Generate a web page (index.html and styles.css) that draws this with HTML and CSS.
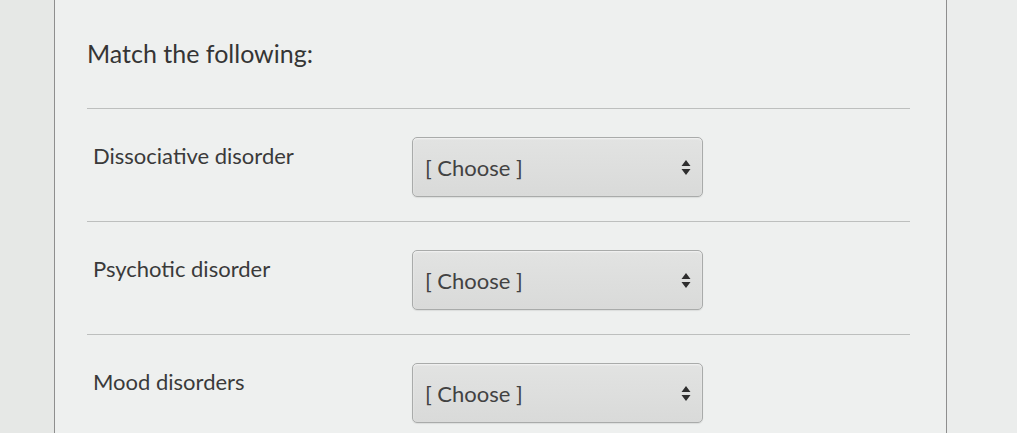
FILE: index.html
```html
<!DOCTYPE html>
<html lang="en">
<head>
<meta charset="utf-8">
<title>Match the following</title>
<link rel="stylesheet" href="styles.css">
</head>
<body>
<div class="page">
  <div class="gutter"></div>
  <main class="panel">
    <h1 class="title">Match the following:</h1>
    <div class="rows">
      <div class="row">
        <div class="label">Dissociative disorder</div>
        <div class="select">
          <span class="select-text">[ Choose ]</span>
          <svg class="arrows" width="10" height="17" viewBox="0 0 10 17"><path d="M5 1 L9.5 7 L0.5 7 Z M5 16 L9.5 10 L0.5 10 Z" fill="#2e2e2e"/></svg>
        </div>
      </div>
      <div class="row">
        <div class="label">Psychotic disorder</div>
        <div class="select">
          <span class="select-text">[ Choose ]</span>
          <svg class="arrows" width="10" height="17" viewBox="0 0 10 17"><path d="M5 1 L9.5 7 L0.5 7 Z M5 16 L9.5 10 L0.5 10 Z" fill="#2e2e2e"/></svg>
        </div>
      </div>
      <div class="row">
        <div class="label">Mood disorders</div>
        <div class="select">
          <span class="select-text">[ Choose ]</span>
          <svg class="arrows" width="10" height="17" viewBox="0 0 10 17"><path d="M5 1 L9.5 7 L0.5 7 Z M5 16 L9.5 10 L0.5 10 Z" fill="#2e2e2e"/></svg>
        </div>
      </div>
    </div>
  </main>
  <div class="gutter gutter-right"></div>
</div>
</body>
</html>
```

FILE: styles.css
```css
html, body {
  margin: 0;
  padding: 0;
  height: 100%;
}
body {
  background: #e7e9e8;
  font-family: Lato, "Noto Sans", sans-serif;
  color: #383838;
  overflow: hidden;
}
.page {
  display: flex;
  height: 433px;
}
.gutter {
  width: 54px;
  flex: none;
  background: #e6e8e6;
}
.gutter-right {
  flex: 1;
  background: #ebedec;
}
.panel {
  width: 893px;
  flex: none;
  background: #eef0ef;
  border-left: 1px solid #8e8e8e;
  border-right: 1px solid #8e8e8e;
  padding: 0 36px 0 32px;
  box-sizing: border-box;
}
.title {
  margin: 0;
  padding: 37px 0 0 0;
  height: 108px;
  box-sizing: border-box;
  font-size: 25px;
  font-weight: 400;
  line-height: 32px;
  color: #353535;
}
.row {
  display: flex;
  align-items: flex-start;
  border-top: 1px solid #bdbfbe;
  padding: 28px 0 24px 6px;
  height: 113px;
  box-sizing: border-box;
}
.label {
  width: 319px;
  flex: none;
  padding-top: 6px;
  font-size: 22px;
  line-height: 26px;
  color: #3a3a3a;
}
.select {
  width: 291px;
  height: 60px;
  box-sizing: border-box;
  border: 1px solid #a9abaa;
  border-radius: 5px;
  background: linear-gradient(#e2e3e2, #d9dad9);
  box-shadow: inset 0 1px 2px rgba(255,255,255,0.6), 0 1px 1px rgba(0,0,0,0.08);
  display: flex;
  align-items: center;
  justify-content: space-between;
  padding: 0 11px 0 12px;
}
.select-text {
  font-size: 22px;
  color: #424242;
}
.arrows {
  display: block;
}
```
